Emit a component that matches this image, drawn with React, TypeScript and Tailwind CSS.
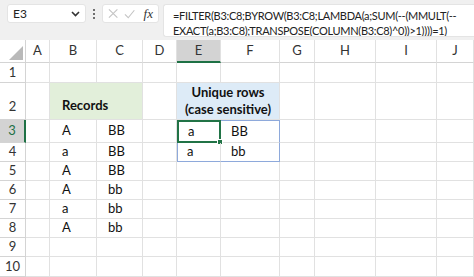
import React from "react";

const cols = ["A", "B", "C", "D", "E", "F", "G", "H", "I", "J"];

const rows = [
  { n: 1, h: "h-[20px]" },
  { n: 2, h: "h-[37px]" },
  { n: 3, h: "h-[23px]" },
  { n: 4, h: "h-[19px]" },
  { n: 5, h: "h-[19px]" },
  { n: 6, h: "h-[19px]" },
  { n: 7, h: "h-[19px]" },
  { n: 8, h: "h-[19px]" },
  { n: 9, h: "h-[19px]" },
  { n: 10, h: "h-[20px]" },
];

const records: Record<number, [string, string]> = {
  3: ["A", "BB"],
  4: ["a", "BB"],
  5: ["A", "BB"],
  6: ["A", "bb"],
  7: ["a", "bb"],
  8: ["A", "bb"],
};

const widths = [
  "w-[24px]",
  "w-[47px]",
  "w-[46px]",
  "w-[34px]",
  "w-[44px]",
  "w-[59px]",
  "w-[35px]",
  "w-[61px]",
  "w-[61px]",
  "w-[37px]",
];

const cell = "border-r border-b border-[#e1e1e1] flex items-center";

const FormulaBar = () => (
  <div className="h-[40px] bg-[#f0f0f0] flex items-start pt-[4px] pl-[7px] gap-[1px]">
    <div className="w-[79px] h-[19px] bg-white rounded-[3px] border border-[#e4e4e4] flex items-center justify-between px-[5px] text-[12px] text-[#222]">
      <span>E3</span>
      <svg width="9" height="6" viewBox="0 0 9 6">
        <path d="M1 1l3.5 3.5L8 1" fill="none" stroke="#333" strokeWidth="1.6" />
      </svg>
    </div>
    <div className="w-[14px] h-[19px] flex flex-col items-center justify-center gap-[2px]">
      <span className="w-[2px] h-[2px] bg-[#444] rounded-full" />
      <span className="w-[2px] h-[2px] bg-[#444] rounded-full" />
      <span className="w-[2px] h-[2px] bg-[#444] rounded-full" />
    </div>
    <div className="w-[57px] h-[19px] bg-white rounded-[3px] border border-[#e4e4e4] flex items-center px-[5px] gap-[6px]">
      <svg width="11" height="11" viewBox="0 0 11 11">
        <path d="M1 1l9 9M10 1l-9 9" stroke="#c4c4c4" strokeWidth="1.2" />
      </svg>
      <svg width="12" height="10" viewBox="0 0 12 10">
        <path d="M1 5.5l3.5 3.5L11 1" fill="none" stroke="#c4c4c4" strokeWidth="1.2" />
      </svg>
      <span className="ml-[2px] text-[13px] italic text-[#333] font-['Liberation_Serif',serif]">fx</span>
    </div>
    <div className="flex-1 h-[33px] bg-white rounded-l-[3px] border border-[#e4e4e4] border-r-0 ml-[3px] pl-[9px] pt-[3px] text-[11px] tracking-[-0.3px] leading-[15px] text-[#222] whitespace-nowrap overflow-hidden">
      <div>=FILTER(B3:C8;BYROW(B3:C8;LAMBDA(a;SUM(--(MMULT(--</div>
      <div>EXACT(a;B3:C8);TRANSPOSE(COLUMN(B3:C8)^0))&gt;1))))=1)</div>
    </div>
  </div>
);

const HeaderRow = () => (
  <div className="flex h-[23px] bg-white">
    <div className="w-[26px] border-r border-b border-[#d4d4d4] flex items-end justify-end pr-[2px] pb-[2px]">
      <svg width="14" height="14" viewBox="0 0 14 14">
        <path d="M14 0L14 14L0 14Z" fill="#b9b9b9" />
      </svg>
    </div>
    {cols.map((c, i) => (
      <div
        key={c}
        className={`${widths[i]} flex items-center justify-center text-[13px] text-[#333] border-r border-[#e1e1e1] ${
          c === "E" ? "bg-[#d3d3d3] border-b-2 border-b-[#1e7145]" : "border-b border-b-[#d4d4d4]"
        }`}
      >
        {c}
      </div>
    ))}
  </div>
);

const App = () => {
  return (
    <div className="w-[474px] h-[277px] overflow-hidden bg-white font-['Lato','Open_Sans',sans-serif]">
      <FormulaBar />
      <HeaderRow />
      {rows.map((r) => (
        <div key={r.n} className={`flex ${r.h}`}>
          <div
            className={`w-[26px] flex items-center justify-center text-[13px] border-b ${
              r.n === 3
                ? "bg-[#d3d3d3] text-[#1e7145] border-r-2 border-r-[#1e7145] border-b-[#d4d4d4]"
                : "text-[#333] border-r border-[#d4d4d4]"
            } ${r.n === 2 ? "items-end pb-[3px]" : ""}`}
          >
            {r.n}
          </div>
          <div className={`${widths[0]} ${cell}`} />
          {r.n === 2 ? (
            <div className="w-[93px] bg-[#e2efda] border-b border-r border-[#e1e1e1] flex items-end pl-[12px] pb-[4px] text-[13px] font-bold text-[#111]">
              Records
            </div>
          ) : (
            <>
              <div className={`${widths[1]} ${cell} pl-[12px] text-[13px] text-[#111]`}>
                {records[r.n]?.[0]}
              </div>
              <div className={`${widths[2]} ${cell} pl-[11px] text-[13px] text-[#111]`}>
                {records[r.n]?.[1]}
              </div>
            </>
          )}
          <div className={`${widths[3]} ${cell}`} />
          {r.n === 2 ? (
            <div className="w-[103px] bg-[#ddebf7] border-b border-r border-[#e1e1e1] flex flex-col items-center justify-center text-[13px] leading-[17px] font-bold text-[#111]">
              <span>Unique rows</span>
              <span>(case sensitive)</span>
            </div>
          ) : r.n === 3 || r.n === 4 ? (
            <div className="w-[103px] flex">
              <div
                className={`relative w-[44px] flex items-center pl-[9px] text-[13px] text-[#111] ${
                  r.n === 3
                    ? "border-2 border-[#217346]"
                    : "border-l border-b border-[#8ea9db] border-r border-r-[#e1e1e1]"
                }`}
              >
                a
                {r.n === 3 && (
                  <span className="absolute -right-[4px] -bottom-[4px] w-[6px] h-[6px] bg-[#217346] border border-white" />
                )}
              </div>
              <div
                className={`w-[59px] flex items-center pl-[10px] text-[13px] text-[#111] border-r border-[#8ea9db] ${
                  r.n === 3 ? "border-t border-b border-b-[#e1e1e1]" : "border-b"
                }`}
              >
                {r.n === 3 ? "BB" : "bb"}
              </div>
            </div>
          ) : (
            <>
              <div className={`${widths[4]} ${cell}`} />
              <div className={`${widths[5]} ${cell}`} />
            </>
          )}
          <div className={`${widths[6]} ${cell}`} />
          <div className={`${widths[7]} ${cell}`} />
          <div className={`${widths[8]} ${cell}`} />
          <div className={`${widths[9]} ${cell}`} />
        </div>
      ))}
    </div>
  );
};

export default App;
